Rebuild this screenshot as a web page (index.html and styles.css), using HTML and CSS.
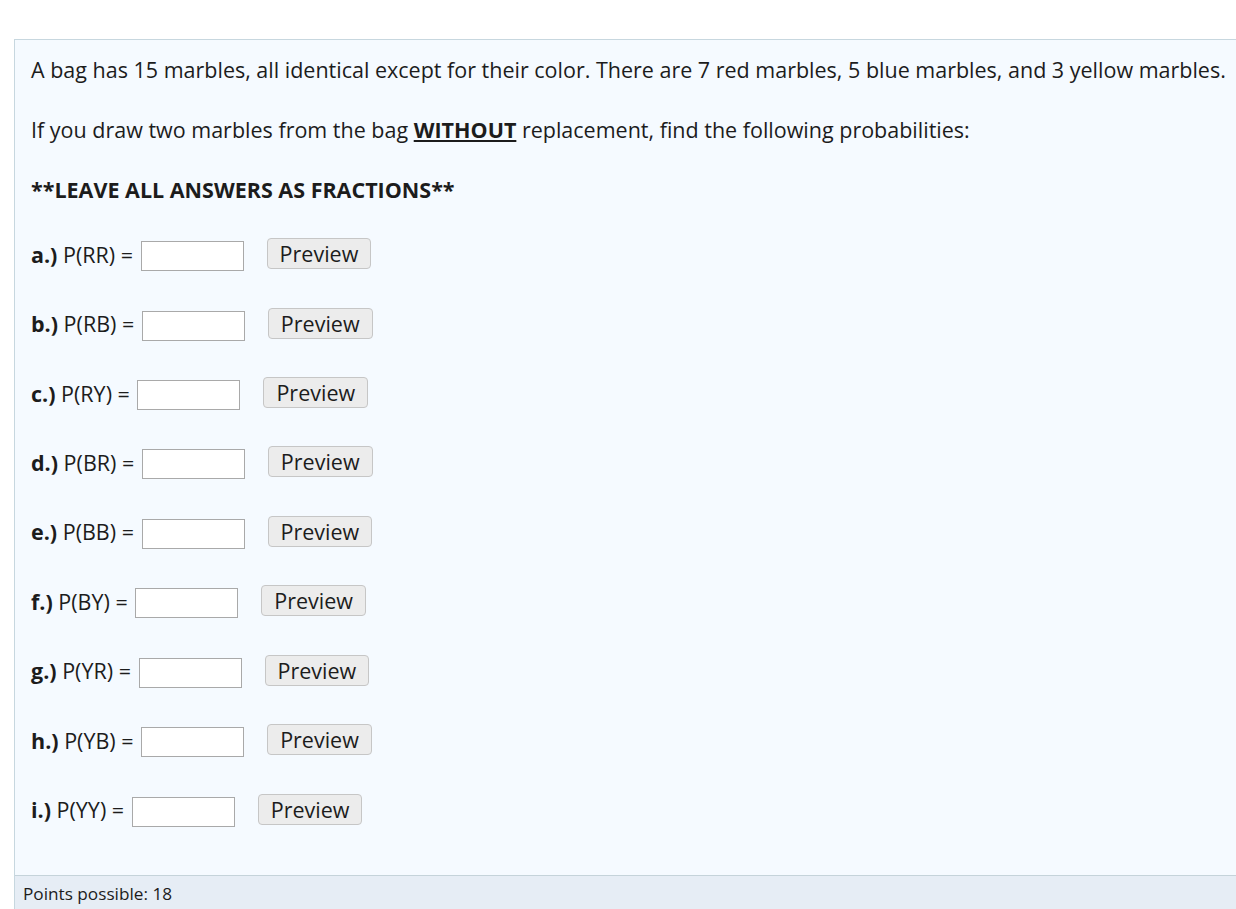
FILE: index.html
```html
<!DOCTYPE html>
<html>
<head>
<meta charset="utf-8">
<link rel="stylesheet" href="styles.css">
</head>
<body>
<div class="question">
  <div class="question-body">
    <p class="para">A bag has 15 marbles, all identical except for their color. There are 7 red marbles, 5 blue marbles, and 3 yellow marbles.</p>
    <p class="para">If you draw two marbles from the bag <u class="strong">WITHOUT</u> replacement, find the following probabilities:</p>
    <p class="para"><b class="strong">**LEAVE ALL ANSWERS AS FRACTIONS**</b></p>
    <div class="row"><b class="strong">a.)</b>&nbsp;P(RR) = <input class="answer" type="text"><button class="preview">Preview</button></div>
    <div class="row"><b class="strong">b.)</b>&nbsp;P(RB) = <input class="answer" type="text"><button class="preview">Preview</button></div>
    <div class="row"><b class="strong">c.)</b>&nbsp;P(RY) = <input class="answer" type="text"><button class="preview">Preview</button></div>
    <div class="row"><b class="strong">d.)</b>&nbsp;P(BR) = <input class="answer" type="text"><button class="preview">Preview</button></div>
    <div class="row"><b class="strong">e.)</b>&nbsp;P(BB) = <input class="answer" type="text"><button class="preview">Preview</button></div>
    <div class="row"><b class="strong">f.)</b>&nbsp;P(BY) = <input class="answer" type="text"><button class="preview">Preview</button></div>
    <div class="row"><b class="strong">g.)</b>&nbsp;P(YR) = <input class="answer" type="text"><button class="preview">Preview</button></div>
    <div class="row"><b class="strong">h.)</b>&nbsp;P(YB) = <input class="answer" type="text"><button class="preview">Preview</button></div>
    <div class="row"><b class="strong">i.)</b>&nbsp;P(YY) = <input class="answer" type="text"><button class="preview">Preview</button></div>
  </div>
  <div class="question-footer">Points possible: 18</div>
</div>
</body>
</html>
```

FILE: styles.css
```css
html, body {
  margin: 0;
  padding: 0;
  background: #ffffff;
  overflow: hidden;
}
body {
  font-family: "Open Sans", "Liberation Sans", sans-serif;
  color: #1c1c1c;
  padding-top: 39px;
  padding-left: 14px;
}
.question {
  width: 1260px;
  border: 1px solid #c7d7df;
  border-right: none;
  background: #f5faff;
}
.question-body {
  padding: 15px 16px 15px 16px;
}
.para {
  margin: 0 0 30px 0;
  font-size: 21.5px;
  line-height: 30px;
  white-space: nowrap;
}
.strong {
  font-weight: 700;
}
.row {
  display: flex;
  align-items: center;
  height: 39.43px;
  margin-bottom: 30px;
  font-size: 21.5px;
  line-height: 30px;
  white-space: pre;
}
.answer {
  box-sizing: border-box;
  width: 103px;
  height: 30px;
  margin: 3px 0 0 2px;
  padding: 0 4px;
  border: 1px solid #a9a9a9;
  border-radius: 0;
  background: #ffffff;
  font-family: inherit;
  font-size: 16px;
}
.preview {
  box-sizing: border-box;
  height: 31px;
  margin: -2px 0 0 23px;
  padding: 0 12px;
  border: 1px solid #c6c6c6;
  border-radius: 4px;
  background: #ececec;
  color: #1c1c1c;
  font-family: inherit;
  font-size: 21.5px;
  line-height: 29px;
}
.question-footer {
  border-top: 1px solid #c5d3da;
  background: #e6edf5;
  padding: 5px 8px 10px 8px;
  font-size: 17.2px;
  line-height: 25px;
}
```
